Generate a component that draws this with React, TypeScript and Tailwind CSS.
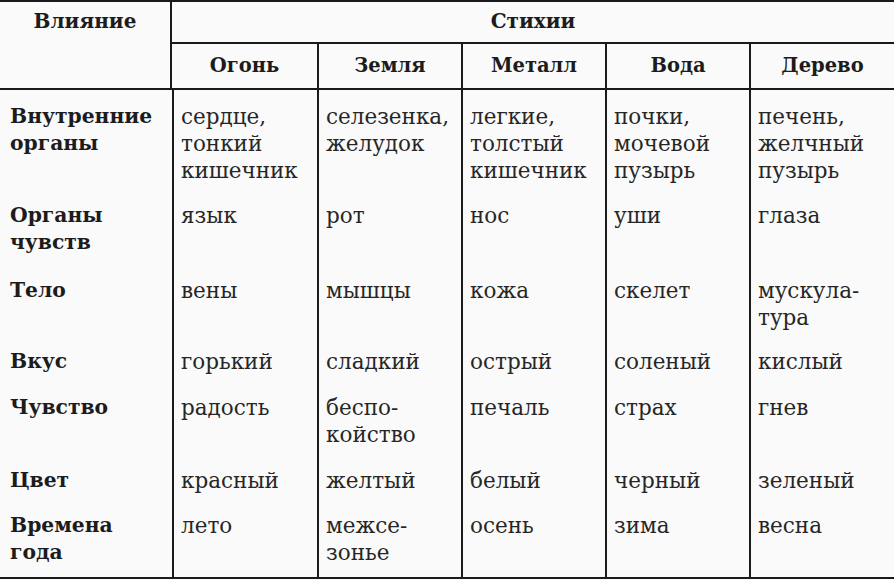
const cols = ["Огонь", "Земля", "Металл", "Вода", "Дерево"];

const widths = ["w-[172px]", "w-[145px]", "w-[144px]", "w-[144px]", "w-[144px]", "w-[145px]"];

type Row = { label: string[]; cells: string[][]; pad: string };

const rows: Row[] = [
  {
    label: ["Внутренние", "органы"],
    cells: [
      ["сердце,", "тонкий", "кишечник"],
      ["селезенка,", "желудок"],
      ["легкие,", "толстый", "кишечник"],
      ["почки,", "мочевой", "пузырь"],
      ["печень,", "желчный", "пузырь"],
    ],
    pad: "pt-[13px] pb-[18px]",
  },
  {
    label: ["Органы", "чувств"],
    cells: [["язык"], ["рот"], ["нос"], ["уши"], ["глаза"]],
    pad: "pb-[21px]",
  },
  {
    label: ["Тело"],
    cells: [["вены"], ["мышцы"], ["кожа"], ["скелет"], ["мускула-", "тура"]],
    pad: "pb-[17px]",
  },
  {
    label: ["Вкус"],
    cells: [["горький"], ["сладкий"], ["острый"], ["соленый"], ["кислый"]],
    pad: "pb-[19px]",
  },
  {
    label: ["Чувство"],
    cells: [["радость"], ["беспо-", "койство"], ["печаль"], ["страх"], ["гнев"]],
    pad: "pb-[19px]",
  },
  {
    label: ["Цвет"],
    cells: [["красный"], ["желтый"], ["белый"], ["черный"], ["зеленый"]],
    pad: "pb-[18px]",
  },
  {
    label: ["Времена", "года"],
    cells: [["лето"], ["межсе-", "зонье"], ["осень"], ["зима"], ["весна"]],
    pad: "pb-[11px]",
  },
];

const Lines = ({ lines }: { lines: string[] }) => (
  <>
    {lines.map((l, i) => (
      <div key={i} className="whitespace-nowrap">
        {l}
      </div>
    ))}
  </>
);

export default function App() {
  return (
    <div className="w-[894px] h-[580px] bg-[#fafafa] text-[#1c1c1c] font-['DejaVu_Serif',serif]">
      {/* header */}
      <div className="flex border-t-2 border-b-2 border-[#1a1a1a]">
        <div className="w-[172px] pt-[6px] text-center text-[20px] font-bold leading-[27px]">Влияние</div>
        <div className="flex-1 border-l-2 border-[#1a1a1a]">
          <div className="h-[42px] border-b-2 border-[#1a1a1a] pt-[6px] text-center text-[20px] font-bold leading-[27px]">
            Стихии
          </div>
          <div className="flex h-[44px]">
            {cols.map((c, i) => (
              <div
                key={c}
                className={`${widths[i + 1]} ${i > 0 ? "border-l-2 border-[#1a1a1a]" : ""} pt-[8px] text-center text-[19.5px] font-bold leading-[27px]`}
              >
                {c}
              </div>
            ))}
          </div>
        </div>
      </div>

      {/* body */}
      <div className="border-b-2 border-[#1a1a1a]">
        {rows.map((r, ri) => (
          <div key={ri} className="flex">
            <div className={`${widths[0]} ${r.pad} pl-[10px] text-[20.3px] font-bold leading-[27px]`}>
              <Lines lines={r.label} />
            </div>
            {r.cells.map((c, ci) => (
              <div
                key={ci}
                className={`${widths[ci + 1]} ${r.pad} border-l-2 border-[#1a1a1a] pl-[7px] text-[21.5px] leading-[27px] text-[#262626]`}
              >
                <Lines lines={c} />
              </div>
            ))}
          </div>
        ))}
      </div>
    </div>
  );
}
